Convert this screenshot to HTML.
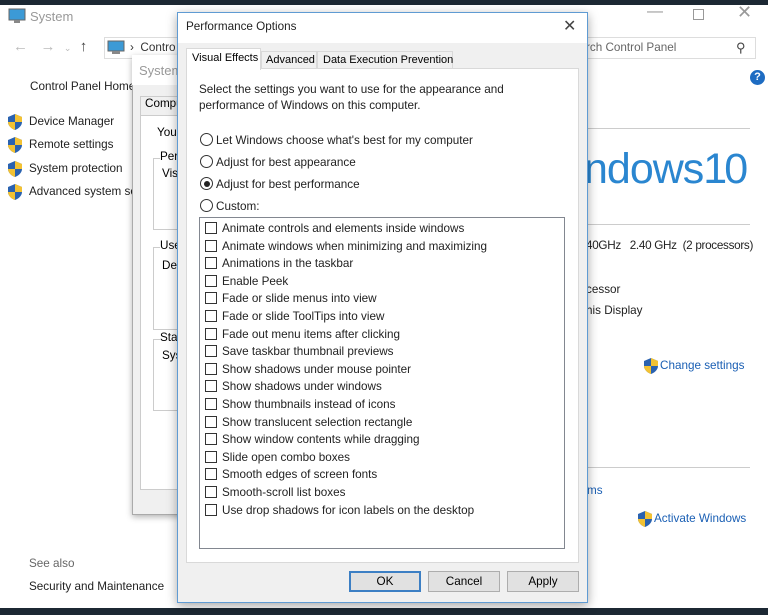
<!DOCTYPE html>
<html><head><meta charset="utf-8"><style>
*{margin:0;padding:0;box-sizing:border-box}
body{width:768px;height:615px;overflow:hidden;background:#fff;font-family:"Liberation Sans",sans-serif;font-size:11.7px;color:#000;position:relative}
.a{position:absolute;white-space:nowrap}
.link{color:#1a5fb4}
.shield{position:absolute;width:14px;height:16px}
</style></head><body>
<div class="a" style="left:0;top:0;width:768px;height:5px;background:#1c2833"></div>
<div class="a" style="left:0;top:608px;width:768px;height:7px;background:#1c2833"></div>
<svg class="a" style="left:8px;top:8px" width="18" height="16"><rect x="1" y="1" width="16" height="11" fill="#3c9ad6" stroke="#666"/><rect x="6" y="12" width="6" height="3" fill="#888"/></svg>
<div class="a" style="left:30px;top:9px;color:#999;font-size:13px">System</div>
<div class="a" style="left:647px;top:3px;color:#999;font-size:16px">—</div>
<div class="a" style="left:693px;top:9px;width:11px;height:11px;border:1px solid #999"></div>
<div class="a" style="left:737px;top:2px;color:#999;font-size:18px">✕</div>
<div class="a" style="left:13px;top:38px;color:#bbb;font-size:15px">←&nbsp;&nbsp;&nbsp;→&nbsp;&nbsp;<span style="font-size:9px">⌄</span>&nbsp;&nbsp;<span style="color:#444">↑</span></div>
<div class="a" style="left:104px;top:37px;width:80px;height:22px;border:1px solid #ddd"></div>
<svg class="a" style="left:107px;top:40px" width="18" height="15"><rect x="1" y="1" width="16" height="10" fill="#3c9ad6" stroke="#666"/><rect x="5" y="11" width="8" height="3" fill="#888"/></svg>
<div class="a" style="left:130px;top:41px;color:#333">›&nbsp;&nbsp;Contro</div>
<div class="a" style="left:575px;top:37px;width:181px;height:22px;border:1px solid #ddd"></div>
<div class="a" style="left:586px;top:41px;color:#666">rch Control Panel</div>
<div class="a" style="left:736px;top:40px;color:#444;font-size:13px">⚲</div>
<div class="a" style="left:750px;top:70px;width:15px;height:15px;border-radius:50%;background:#1e6cc2;color:#fff;font-size:11px;font-weight:bold;text-align:center;line-height:15px">?</div>
<div class="a" style="left:30px;top:80px;color:#222">Control Panel Home</div>
<svg width="0" height="0" style="position:absolute"><defs><g id="sh"><path d="M7 0 L14 3 L14 8 C14 12 10 15 7 16 C4 15 0 12 0 8 L0 3 Z" fill="#2a62b0"/><path d="M7 0 L14 3 L14 8 L7 8 Z" fill="#f3c233"/><path d="M0 8 L7 8 L7 16 C4 15 0 12 0 8Z" fill="#f3c233"/></g></defs></svg>
<svg class="shield" style="left:8px;top:114px"><use href="#sh"/></svg>
<svg class="shield" style="left:8px;top:137px"><use href="#sh"/></svg>
<svg class="shield" style="left:8px;top:161px"><use href="#sh"/></svg>
<svg class="shield" style="left:8px;top:184px"><use href="#sh"/></svg>
<div class="a" style="left:29px;top:115px;color:#222">Device Manager</div>
<div class="a" style="left:29px;top:138px;color:#222">Remote settings</div>
<div class="a" style="left:29px;top:162px;color:#222">System protection</div>
<div class="a" style="left:29px;top:185px;color:#222">Advanced system se</div>
<div class="a" style="left:29px;top:557px;color:#666">See also</div>
<div class="a" style="left:29px;top:580px;color:#222">Security and Maintenance</div>
<div class="a" style="left:585px;top:128px;width:165px;height:1px;background:#ccc"></div>
<div class="a" style="left:584px;top:145px;color:#2a86d0;font-size:43px;letter-spacing:-1px">ndows<span style="letter-spacing:-3px">10</span></div>
<div class="a" style="left:585px;top:224px;width:165px;height:1px;background:#ccc"></div>
<div class="a" style="left:586px;top:239px;color:#222;letter-spacing:-0.3px">40GHz&nbsp;&nbsp; 2.40 GHz&nbsp; (2 processors)</div>
<div class="a" style="left:586px;top:283px;color:#222">cessor</div>
<div class="a" style="left:586px;top:304px;color:#222">his Display</div>
<svg class="shield" style="left:644px;top:358px"><use href="#sh"/></svg>
<div class="a link" style="left:660px;top:359px">Change settings</div>
<div class="a" style="left:585px;top:467px;width:165px;height:1px;background:#ccc"></div>
<div class="a link" style="left:587px;top:484px">ms</div>
<svg class="shield" style="left:638px;top:511px"><use href="#sh"/></svg>
<div class="a link" style="left:654px;top:512px">Activate Windows</div>
<div class="a" style="left:132px;top:55px;width:60px;height:460px;background:#f0f0f0;border:1px solid #aaa;box-shadow:0 2px 6px rgba(0,0,0,.3)"></div>
<div class="a" style="left:132px;top:55px;width:60px;height:30px;background:#fff"></div>
<div class="a" style="left:139px;top:63px;color:#999;font-size:13px">System</div>
<div class="a" style="left:140px;top:96px;width:50px;height:20px;border:1px solid #ccc;background:#f0f0f0"></div>
<div class="a" style="left:145px;top:97px">Compu</div>
<div class="a" style="left:140px;top:115px;width:50px;height:375px;background:#fff;border:1px solid #ccc"></div>
<div class="a" style="left:157px;top:126px">You</div>
<div class="a" style="left:153px;top:158px;width:40px;height:72px;border:1px solid #ccc"></div>
<div class="a" style="left:160px;top:150px;background:#fff">Per</div>
<div class="a" style="left:162px;top:167px">Visu</div>
<div class="a" style="left:153px;top:247px;width:40px;height:83px;border:1px solid #ccc"></div>
<div class="a" style="left:160px;top:239px;background:#fff">Use</div>
<div class="a" style="left:162px;top:259px">Des</div>
<div class="a" style="left:153px;top:339px;width:40px;height:72px;border:1px solid #ccc"></div>
<div class="a" style="left:160px;top:331px;background:#fff">Sta</div>
<div class="a" style="left:162px;top:349px">Sys</div>
<div class="a" style="left:177px;top:12px;width:411px;height:591px;background:#f0f0f0;border:1px solid #5f9bd3;box-shadow:0 3px 10px rgba(0,0,0,.35)"></div>
<div class="a" style="left:178px;top:13px;width:409px;height:30px;background:#fff"></div>
<div class="a" style="left:186px;top:20px;color:#222">Performance Options</div>
<div class="a" style="left:563px;top:16px;font-size:16px;color:#444">✕</div>
<div class="a" style="left:186px;top:68px;width:393px;height:495px;background:#fff;border:1px solid #d9d9d9"></div>
<div class="a" style="left:261px;top:51px;width:56px;height:18px;border:1px solid #d9d9d9;background:#f0f0f0;font-size:11px;padding:2px 0 0 4px">Advanced</div>
<div class="a" style="left:317px;top:51px;width:136px;height:18px;border:1px solid #d9d9d9;background:#f0f0f0;font-size:11px;padding:2px 0 0 5px">Data Execution Prevention</div>
<div class="a" style="left:186px;top:48px;width:75px;height:22px;border:1px solid #d9d9d9;border-bottom:none;background:#fff;font-size:11px;padding:3px 0 0 5px">Visual Effects</div>
<div class="a" style="left:199px;top:82px;line-height:16px;color:#222">Select the settings you want to use for the appearance and<br>performance of Windows on this computer.</div>
<div class="a" style="left:200px;top:130px;line-height:22px;color:#222">
<div><span style="display:inline-block;width:13px;height:13px;border:1px solid #333;border-radius:50%;vertical-align:-2px;margin-right:3px"></span>Let Windows choose what's best for my computer</div>
<div><span style="display:inline-block;width:13px;height:13px;border:1px solid #333;border-radius:50%;vertical-align:-2px;margin-right:3px"></span>Adjust for best appearance</div>
<div><span style="display:inline-block;width:13px;height:13px;border:1px solid #333;border-radius:50%;vertical-align:-2px;margin-right:3px;position:relative"><span style="position:absolute;left:2.5px;top:2.5px;width:6px;height:6px;border-radius:50%;background:#222"></span></span>Adjust for best performance</div>
<div><span style="display:inline-block;width:13px;height:13px;border:1px solid #333;border-radius:50%;vertical-align:-2px;margin-right:3px"></span>Custom:</div>
</div>
<div class="a" style="left:199px;top:217px;width:366px;height:332px;border:1px solid #828790;background:#fff"></div>
<div class="a" style="left:205px;top:220px;line-height:17.6px;color:#222">
<div><span style="display:inline-block;width:12px;height:12px;border:1px solid #333;vertical-align:-2px;margin-right:5px"></span>Animate controls and elements inside windows</div>
<div><span style="display:inline-block;width:12px;height:12px;border:1px solid #333;vertical-align:-2px;margin-right:5px"></span>Animate windows when minimizing and maximizing</div>
<div><span style="display:inline-block;width:12px;height:12px;border:1px solid #333;vertical-align:-2px;margin-right:5px"></span>Animations in the taskbar</div>
<div><span style="display:inline-block;width:12px;height:12px;border:1px solid #333;vertical-align:-2px;margin-right:5px"></span>Enable Peek</div>
<div><span style="display:inline-block;width:12px;height:12px;border:1px solid #333;vertical-align:-2px;margin-right:5px"></span>Fade or slide menus into view</div>
<div><span style="display:inline-block;width:12px;height:12px;border:1px solid #333;vertical-align:-2px;margin-right:5px"></span>Fade or slide ToolTips into view</div>
<div><span style="display:inline-block;width:12px;height:12px;border:1px solid #333;vertical-align:-2px;margin-right:5px"></span>Fade out menu items after clicking</div>
<div><span style="display:inline-block;width:12px;height:12px;border:1px solid #333;vertical-align:-2px;margin-right:5px"></span>Save taskbar thumbnail previews</div>
<div><span style="display:inline-block;width:12px;height:12px;border:1px solid #333;vertical-align:-2px;margin-right:5px"></span>Show shadows under mouse pointer</div>
<div><span style="display:inline-block;width:12px;height:12px;border:1px solid #333;vertical-align:-2px;margin-right:5px"></span>Show shadows under windows</div>
<div><span style="display:inline-block;width:12px;height:12px;border:1px solid #333;vertical-align:-2px;margin-right:5px"></span>Show thumbnails instead of icons</div>
<div><span style="display:inline-block;width:12px;height:12px;border:1px solid #333;vertical-align:-2px;margin-right:5px"></span>Show translucent selection rectangle</div>
<div><span style="display:inline-block;width:12px;height:12px;border:1px solid #333;vertical-align:-2px;margin-right:5px"></span>Show window contents while dragging</div>
<div><span style="display:inline-block;width:12px;height:12px;border:1px solid #333;vertical-align:-2px;margin-right:5px"></span>Slide open combo boxes</div>
<div><span style="display:inline-block;width:12px;height:12px;border:1px solid #333;vertical-align:-2px;margin-right:5px"></span>Smooth edges of screen fonts</div>
<div><span style="display:inline-block;width:12px;height:12px;border:1px solid #333;vertical-align:-2px;margin-right:5px"></span>Smooth-scroll list boxes</div>
<div><span style="display:inline-block;width:12px;height:12px;border:1px solid #333;vertical-align:-2px;margin-right:5px"></span>Use drop shadows for icon labels on the desktop</div>
</div>
<div class="a" style="left:349px;top:571px;width:72px;height:21px;border:2px solid #3c7fc4;background:#e1e1e1;text-align:center;line-height:17px">OK</div>
<div class="a" style="left:428px;top:571px;width:72px;height:21px;border:1px solid #adadad;background:#e1e1e1;text-align:center;line-height:19px">Cancel</div>
<div class="a" style="left:507px;top:571px;width:72px;height:21px;border:1px solid #adadad;background:#e1e1e1;text-align:center;line-height:19px">Apply</div>
</body></html>
